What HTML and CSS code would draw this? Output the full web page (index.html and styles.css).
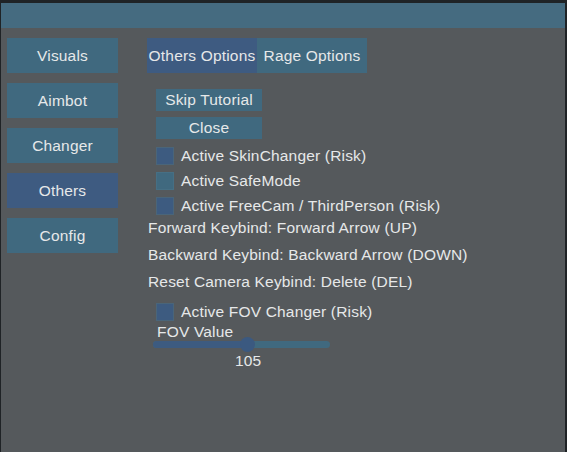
FILE: index.html
```html
<!DOCTYPE html>
<html>
<head>
<meta charset="utf-8">
<link rel="stylesheet" href="styles.css">
</head>
<body>
<div class="window">
  <div class="titlebar"></div>
  <div class="main">
    <nav class="sidebar">
      <div class="navbtn">Visuals</div>
      <div class="navbtn">Aimbot</div>
      <div class="navbtn">Changer</div>
      <div class="navbtn active">Others</div>
      <div class="navbtn">Config</div>
    </nav>
    <section class="content">
      <div class="tabs">
        <div class="tab active">Others Options</div>
        <div class="tab">Rage Options</div>
      </div>
      <div class="smallbtn first">Skip Tutorial</div>
      <div class="smallbtn second">Close</div>
      <label class="check c1"><span class="box hov"></span>Active SkinChanger (Risk)</label>
      <label class="check c2"><span class="box"></span>Active SafeMode</label>
      <label class="check c2"><span class="box hov"></span>Active FreeCam / ThirdPerson (Risk)</label>
      <div class="line l1">Forward Keybind: Forward Arrow (UP)</div>
      <div class="line l2">Backward Keybind: Backward Arrow (DOWN)</div>
      <div class="line l2">Reset Camera Keybind: Delete (DEL)</div>
      <label class="check c3"><span class="box hov"></span>Active FOV Changer (Risk)</label>
      <div class="slabel">FOV Value</div>
      <div class="slider">
        <div class="fill" style="width:94px"></div>
        <div class="grab" style="left:87px"></div>
      </div>
      <div class="svalue">105</div>
    </section>
  </div>
</div>
</body>
</html>
```

FILE: styles.css
```css
html, body {
  margin: 0;
  padding: 0;
  background: #1f2326;
  height: 100%;
  overflow: hidden;
}
body {
  font-family: "Liberation Sans", Arial, sans-serif;
  font-size: 15.5px;
  letter-spacing: 0.18px;
  color: #e6e8e9;
}
.window {
  margin: 3px 1px 0 1px;
  width: 564px;
  height: 449px;
  background: #55595c;
  display: flex;
  flex-direction: column;
}
.titlebar {
  height: 25px;
  background: #456b80;
  flex: none;
}
.main {
  display: flex;
  padding: 10px 0 0 6px;
  gap: 29px;
}
.sidebar {
  display: flex;
  flex-direction: column;
  gap: 10px;
  width: 111px;
}
.navbtn {
  height: 35px;
  background: #40697f;
  display: flex;
  align-items: center;
  justify-content: center;
}
.navbtn.active, .tab.active {
  background: #3e5b81;
}
.content {
  display: flex;
  flex-direction: column;
  align-items: flex-start;
}
.tabs {
  display: flex;
}
.tab {
  width: 110px;
  height: 35px;
  background: #40697f;
  display: flex;
  align-items: center;
  justify-content: center;
  white-space: nowrap;
}
.smallbtn {
  width: 106px;
  height: 22px;
  margin-left: 9px;
  background: #40697f;
  display: flex;
  align-items: center;
  justify-content: center;
}
.smallbtn.first { margin-top: 16px; }
.smallbtn.second { margin-top: 6px; }
.check {
  display: flex;
  align-items: center;
  height: 18px;
  margin-left: 9px;
  gap: 7px;
  white-space: nowrap;
}
.check.c1 { margin-top: 8px; }
.check.c2 { margin-top: 7px; }
.check.c3 { margin-top: 11px; }
.box {
  width: 18px;
  height: 18px;
  box-sizing: border-box;
  background: #40697f;
  border: 1px solid #466f84;
}
.box.hov {
  background: #3d5b80;
  border-color: #4a6579;
}
.line {
  height: 20px;
  line-height: 20px;
  margin-left: 1px;
  white-space: nowrap;
}
.line.l1 { margin-top: 3px; }
.line.l2 { margin-top: 7px; }
.slabel {
  margin-left: 10px;
  height: 16px;
  line-height: 16px;
  margin-top: 3px;
}
.slider {
  position: relative;
  margin-left: 6px;
  width: 177px;
  height: 7px;
  border-radius: 4px;
  background: #40697f;
  margin-top: 1px;
}
.fill {
  height: 7px;
  border-radius: 4px 0 0 4px;
  background: #3d5b80;
}
.grab {
  position: absolute;
  top: -4px;
  width: 15px;
  height: 15px;
  border-radius: 50%;
  background: #3b5980;
}
.svalue {
  margin-left: 88px;
  margin-top: 5px;
  height: 16px;
  line-height: 16px;
}
```
